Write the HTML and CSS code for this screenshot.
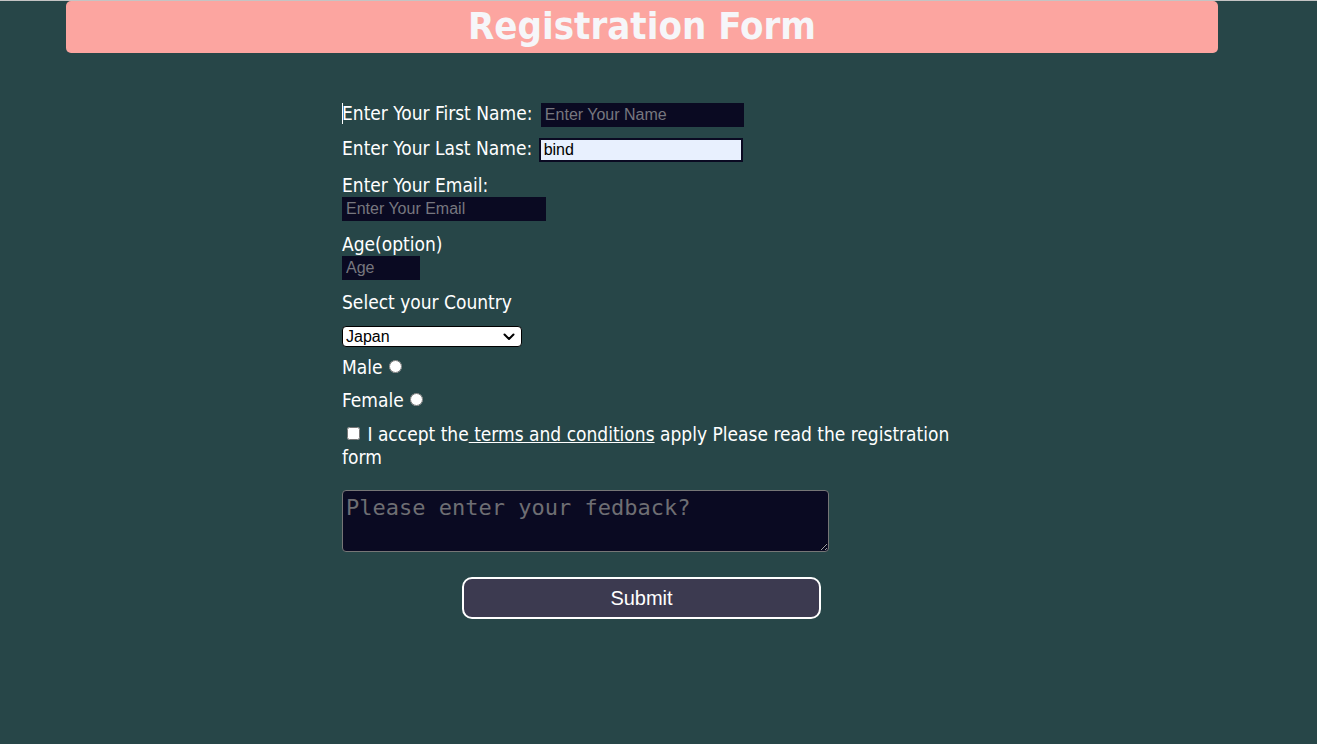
FILE: index.html
```html
<!DOCTYPE html>
<html lang="en">
<head>
<meta charset="utf-8">
<title>Registration Form</title>
<link rel="stylesheet" href="styles.css">
</head>
<body>
<div class="page">
  <h1 class="header">Registration Form</h1>
  <form class="form">
    <div class="row row-first"><span class="caret"></span><label for="fname">Enter Your First Name:</label> <input id="fname" class="field field-name" type="text" placeholder="Enter Your Name"></div>
    <div class="row row-last"><label for="lname">Enter Your Last Name:</label> <input id="lname" class="field field-filled" type="text" value="bind"></div>
    <div class="row row-email"><label for="email">Enter Your Email:</label><br><input id="email" class="field field-email" type="email" placeholder="Enter Your Email"></div>
    <div class="row row-age"><label for="age">Age(option)</label><br><input id="age" class="field field-age" type="text" placeholder="Age"></div>
    <div class="row row-country-label">Select your Country</div>
    <div class="row row-country">
      <span class="select-wrap">
        <select class="select">
          <option>Japan</option>
          <option>India</option>
          <option>USA</option>
        </select>
        <svg class="chevron" width="12" height="8" viewBox="0 0 12 8" aria-hidden="true"><path d="M1.5 1.5 L6 6 L10.5 1.5" fill="none" stroke="#000" stroke-width="2" stroke-linecap="round" stroke-linejoin="round"/></svg>
      </span>
    </div>
    <div class="row row-radio row-male">Male <input class="radio" type="radio" name="gender"></div>
    <div class="row row-radio">Female <input class="radio" type="radio" name="gender"></div>
    <div class="row row-terms"><input class="check" type="checkbox"> I accept the<a href="#" class="link"> terms and conditions</a> apply Please read the registration form</div>
    <div class="row row-feedback"><textarea class="feedback" placeholder="Please enter your fedback?"></textarea></div>
    <div class="row row-submit"><button type="button" class="submit">Submit</button></div>
  </form>
</div>
</body>
</html>
```
FILE: styles.css
```css
html, body {
  margin: 0;
  padding: 0;
}
body {
  background: #274648;
  border-top: 1px solid #c4c4c4;
  font-family: "DejaVu Sans Condensed", "DejaVu Sans", sans-serif;
  color: #ffffff;
  height: 743px;
}
.page {
  width: 1284px;
}
.header {
  width: 1152px;
  height: 52px;
  margin: 0 auto;
  background: #fca5a0;
  border-radius: 5px;
  color: #f6f6f9;
  text-align: center;
  font-family: "DejaVu Sans Condensed", "DejaVu Sans", sans-serif;
  font-weight: bold;
  font-size: 38px;
  line-height: 50px;
}
.form {
  width: 600px;
  margin: 49px auto 0;
  font-size: 19px;
  line-height: 23px;
}
.row {
  display: block;
}
.caret {
  display: inline-block;
  width: 1px;
  height: 21px;
  background: #ffffff;
  vertical-align: -4px;
  margin-right: -1px;
}
.field {
  font-family: "Liberation Sans", Arial, sans-serif;
  font-size: 16px;
  height: 24px;
  box-sizing: border-box;
  border: none;
  background: #0a0a22;
  color: #ffffff;
  padding: 1px 4px;
  margin: 0;
  vertical-align: middle;
}
.field::placeholder {
  color: #77777f;
}
.field-name {
  width: 203px;
  margin-left: 3px;
}
.row-first {
  height: 26px;
}
.row-last {
  margin-top: 9px;
  height: 24px;
}
.field-filled {
  width: 204px;
  margin-left: 1px;
  background: #e8f0fe;
  color: #000000;
  border: 2px solid #0a0a22;
  padding: 0 3px;
}
.row-email {
  margin-top: 13px;
}
.field-email {
  width: 204px;
  vertical-align: top;
}
.row-age {
  margin-top: 12px;
}
.field-age {
  width: 78px;
  vertical-align: top;
}
.row-country-label {
  margin-top: 11px;
}
.row-country {
  margin-top: 12px;
  height: 22px;
}
.select-wrap {
  position: relative;
  display: inline-block;
  vertical-align: top;
}
.select {
  -webkit-appearance: none;
  appearance: none;
  display: block;
  width: 180px;
  height: 21px;
  box-sizing: border-box;
  font-family: "Liberation Sans", Arial, sans-serif;
  font-size: 16px;
  line-height: 19px;
  border: 1px solid #000000;
  border-radius: 4px;
  background: #ffffff;
  color: #000000;
  padding: 0 3px;
  margin: 0;
}
.chevron {
  position: absolute;
  right: 7px;
  top: 7px;
  pointer-events: none;
}
.row-radio {
  margin-top: 10px;
}
.row-male {
  margin-top: 8px;
}
.radio {
  margin: 0 0 0 1px;
  width: 13px;
  height: 13px;
  vertical-align: 1px;
}
.row-terms {
  margin-top: 11px;
  margin-right: -14px;
}
.check {
  margin: 0 2px 0 5px;
  width: 13px;
  height: 13px;
  vertical-align: 1px;
}
.link {
  color: #ffffff;
  text-decoration: underline;
}
.row-feedback {
  margin-top: 21px;
  height: 62px;
}
.feedback {
  width: 487px;
  height: 62px;
  box-sizing: border-box;
  background: #0a0a22;
  border: 1px solid #767676;
  border-radius: 4px;
  color: #ffffff;
  font-family: "DejaVu Sans Mono", monospace;
  font-size: 22px;
  padding: 4px 3px 0;
  margin: 0;
  resize: both;
  display: block;
}
.feedback::placeholder {
  color: #6e6e73;
}
.row-submit {
  margin-top: 25px;
}
.submit {
  display: block;
  width: 359px;
  height: 42px;
  margin-left: 120px;
  background: #3c3a50;
  border: 2px solid #ffffff;
  border-radius: 10px;
  color: #ffffff;
  font-family: "Liberation Sans", Arial, sans-serif;
  font-size: 20px;
}
```
